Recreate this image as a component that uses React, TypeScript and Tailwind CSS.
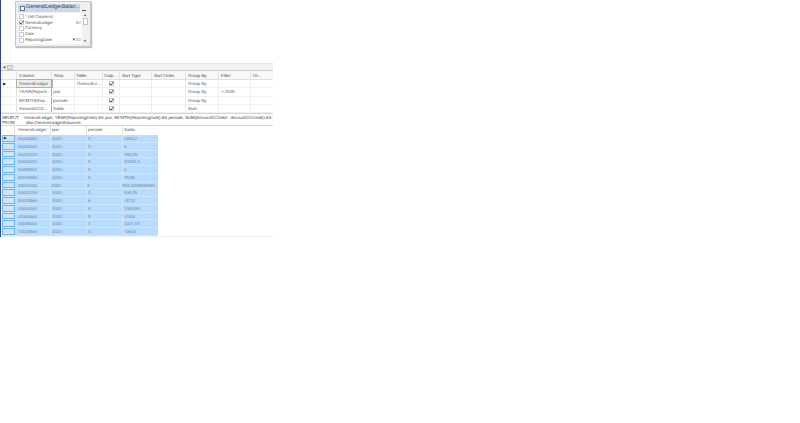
const font = { fontFamily: '"Liberation Sans", Arial, sans-serif' }

const designRows = [
  { column: 'GeneralLedger', alias: '', table: 'GeneralLe...', groupBy: 'Group By', filter: '' },
  { column: 'YEAR(Reporti...', alias: 'jaar', table: '', groupBy: 'Group By', filter: '= 2020' },
  { column: 'MONTH(Rep...', alias: 'periode', table: '', groupBy: 'Group By', filter: '' },
  { column: 'AmountDCD...', alias: 'Saldo', table: '', groupBy: 'Sum', filter: '' },
]

const results = [
  ['40005550', '2020', '4', '2619,2'],
  ['30040000', '2020', '3', '0'],
  ['40003324', '2020', '3', '794,19'],
  ['40000020', '2020', '8', '13331,9'],
  ['50409902', '2020', '9', '0'],
  ['80199999', '2020', '8', '78,68'],
  ['43000000', '2020', '3', '393,4099999999...'],
  ['40001136', '2020', '1', '539,75'],
  ['80023560', '2020', '6', '-3712'],
  ['43000000', '2020', '9', '1303,89'],
  ['01300000', '2020', '9', '-2300'],
  ['44005000', '2020', '7', '1047,15'],
  ['70134500', '2020', '3', '-164,5'],
]

const tableFields = [
  { name: '* (All Columns)', checked: false },
  { name: 'GeneralLedger', checked: true },
  { name: 'Currency', checked: false },
  { name: 'Date', checked: false },
  { name: 'ReportingDate', checked: false },
]

function Check({ checked }: { checked: boolean }) {
  return (
    <span className="w-[5px] h-[5px] border border-[#c8c8c8] bg-white flex items-center justify-center shrink-0">
      {checked && (
        <svg width="5" height="5" viewBox="0 0 5 5" className="shrink-0">
          <path d="M0.4 2.4 L1.9 4 L4.6 0.8" fill="none" stroke="#444" strokeWidth="1" />
        </svg>
      )}
    </span>
  )
}

function TableBox() {
  return (
    <div className="ml-[14px] w-[76px] h-[46px] bg-[#eef0f3] border border-[#c4c7cc] shadow-[1px_1px_1px_#c0c0c0] p-[2px] flex flex-col">
      <div className="h-[8px] flex shrink-0">
        <div className="w-[62px] bg-[#c9d8ea] flex items-center pl-[2px] gap-[1px]">
          <span className="w-[5px] h-[5px] border border-[#5a7694] bg-white shrink-0" />
          <span className="text-[5.4px] leading-none text-[#444] whitespace-nowrap">GeneralLedgerBalan...</span>
        </div>
        <div className="flex-1 flex items-end justify-center pb-[1px]">
          <span className="w-[4px] h-[1px] bg-[#555]" />
        </div>
      </div>
      <div className="flex flex-1 bg-white mt-[1px] min-h-0">
        <div className="flex-1 flex flex-col justify-between pl-[1px] pr-[1px] py-[1px]">
          {tableFields.map((f) => (
            <div key={f.name} className="flex items-center gap-[1px] h-[6px]">
              <Check checked={f.checked} />
              <span className="text-[4.2px] leading-none text-[#555] whitespace-nowrap flex-1">{f.name}</span>
              {f.name === 'GeneralLedger' && <span className="text-[4.2px] leading-none text-[#444]">Σ≡</span>}
              {f.name === 'ReportingDate' && <span className="text-[4.2px] leading-none text-[#444]">▼Σ≡</span>}
            </div>
          ))}
        </div>
        <div className="w-[6px] bg-[#f0f0f0] flex flex-col items-center shrink-0">
          <span className="text-[3px] leading-[5px] text-[#222]">▲</span>
          <span className="w-[5px] h-[7px] bg-white border border-[#c4c4c4]" />
          <span className="flex-1" />
          <span className="text-[3px] leading-[5px] text-[#222]">▼</span>
        </div>
      </div>
    </div>
  )
}

function DesignGrid() {
  return (
    <div className="h-[43px] w-[272px] bg-white overflow-hidden">
      <div className="flex h-[10px] items-stretch bg-[#f8f8f8] border-t border-[#c8c8c8] border-b border-b-[#e0e0e0] text-[#444] leading-[9px]">
        <div className="w-[16px] border-r border-[#e2e2e2]" />
        <div className="w-[35px] pl-[2px] border-r border-[#e2e2e2]">Column</div>
        <div className="w-[23px] pl-[2px] border-r border-[#e2e2e2]">Alias</div>
        <div className="w-[28px] pl-[1px] border-r border-[#e2e2e2]">Table</div>
        <div className="w-[17px] pl-[1px] border-r border-[#e2e2e2] whitespace-nowrap">Outp...</div>
        <div className="w-[32px] pl-[2px] border-r border-[#e2e2e2]">Sort Type</div>
        <div className="w-[34px] pl-[2px] border-r border-[#e2e2e2]">Sort Order</div>
        <div className="w-[33px] pl-[2px] border-r border-[#e2e2e2]">Group By</div>
        <div className="w-[32px] pl-[2px] border-r border-[#e2e2e2]">Filter</div>
        <div className="flex-1 pl-[2px]">Or...</div>
      </div>
      {designRows.map((r, i) => (
        <div key={r.column} className="flex h-[8.25px] border-b border-[#eeeeee] text-[#555]">
          <div className="w-[16px] border-r border-[#e2e2e2] flex items-center pl-[2px]">
            {i === 0 && <span className="text-[4px] leading-none text-[#111]">▶</span>}
          </div>
          <div className={`w-[35px] border-r border-[#aaaaaa] pl-[2px] whitespace-nowrap ${i === 0 ? 'bg-[#eeeeee] outline outline-[#b0b0b0]' : ''}`}>{r.column}</div>
          <div className="w-[23px] pl-[1px] border-r border-[#eeeeee]">{r.alias}</div>
          <div className="w-[28px] pl-[2px] border-r border-[#eeeeee] whitespace-nowrap">{r.table}</div>
          <div className="w-[17px] border-r border-[#eeeeee] flex items-center justify-center">
            <Check checked />
          </div>
          <div className="w-[32px] border-r border-[#eeeeee]" />
          <div className="w-[34px] border-r border-[#eeeeee]" />
          <div className="w-[33px] pl-[2px] border-r border-[#eeeeee]">{r.groupBy}</div>
          <div className="w-[32px] pl-[2px] border-r border-[#eeeeee]">{r.filter}</div>
          <div className="flex-1" />
        </div>
      ))}
    </div>
  )
}

function ResultGrid() {
  return (
    <div className="w-[156px] ml-[1px] text-[4.3px] leading-[7.75px]">
      <div className="flex h-[9px] bg-white text-[#555] leading-[8px]">
        <div className="w-[13px] border-r border-[#e2e2e2]" />
        <div className="w-[36px] pl-[3px] border-r border-[#e2e2e2]">GeneralLedger</div>
        <div className="w-[36px] pl-[1px] border-r border-[#e2e2e2]">jaar</div>
        <div className="w-[36px] pl-[1px] border-r border-[#e2e2e2]">periode</div>
        <div className="flex-1 pl-[1px]">Saldo</div>
      </div>
      {results.map((r, i) => (
        <div key={i} className="flex h-[7.75px] bg-[#b8dcff] border-b border-[#d0e6fb] text-[#6d8296]">
          <div className="w-[13px] bg-[#cfe3fa] border border-[#6cb6e8] flex items-center pl-[1px]">
            {i === 0 && <span className="text-[3.5px] leading-none text-[#111]">▶</span>}
          </div>
          <div className="w-[36px] pl-[3px] border-r border-[#d0e6fb]">{r[0]}</div>
          <div className="w-[36px] pl-[1px] border-r border-[#d0e6fb]">{r[1]}</div>
          <div className="w-[36px] pl-[1px] border-r border-[#d0e6fb]">{r[2]}</div>
          <div className="flex-1 pl-[1px] whitespace-nowrap">{r[3]}</div>
        </div>
      ))}
    </div>
  )
}

export default function App() {
  return (
    <div className="w-[800px] h-[423px] bg-white overflow-hidden flex text-[4.4px] leading-[8px] [text-rendering:geometricPrecision]" style={font}>
      <div className="w-[1px] h-[237px] bg-[#2f4a86] shrink-0" />
      <div className="flex-1 flex flex-col">
        <div className="h-[63px] pt-[1px]">
          <TableBox />
        </div>
        <div className="h-[7px] w-[272px] bg-[#f2f2f2] border-t border-[#e2e2e2] flex items-center pl-[2px]">
          <span className="text-[3px] leading-none text-[#444] w-[4px]">◀</span>
          <span className="w-[6px] h-[5px] bg-[#e0e0e0] border border-[#c4c4c4]" />
        </div>
        <DesignGrid />
        <div className="h-[13px] w-[272px] border-y border-[#d4d4d4] bg-white overflow-hidden text-[#444] flex text-[4.3px] leading-[5px] pt-[1px]">
          <div className="w-[23px] pl-[1px] shrink-0">SELECT<br />FROM</div>
          <div className="whitespace-nowrap">
            GeneralLedger, YEAR(ReportingDate) AS jaar, MONTH(ReportingDate) AS periode, SUM(AmountDCDebit - AmountDCCredit) AS Saldo
            <br />
            <span className="pl-[2px]">dbo.GeneralLedgerBalances</span>
          </div>
        </div>
        <ResultGrid />
        <div className="w-[272px] h-[1px] bg-[#eeeeee]" />
      </div>
    </div>
  )
}
